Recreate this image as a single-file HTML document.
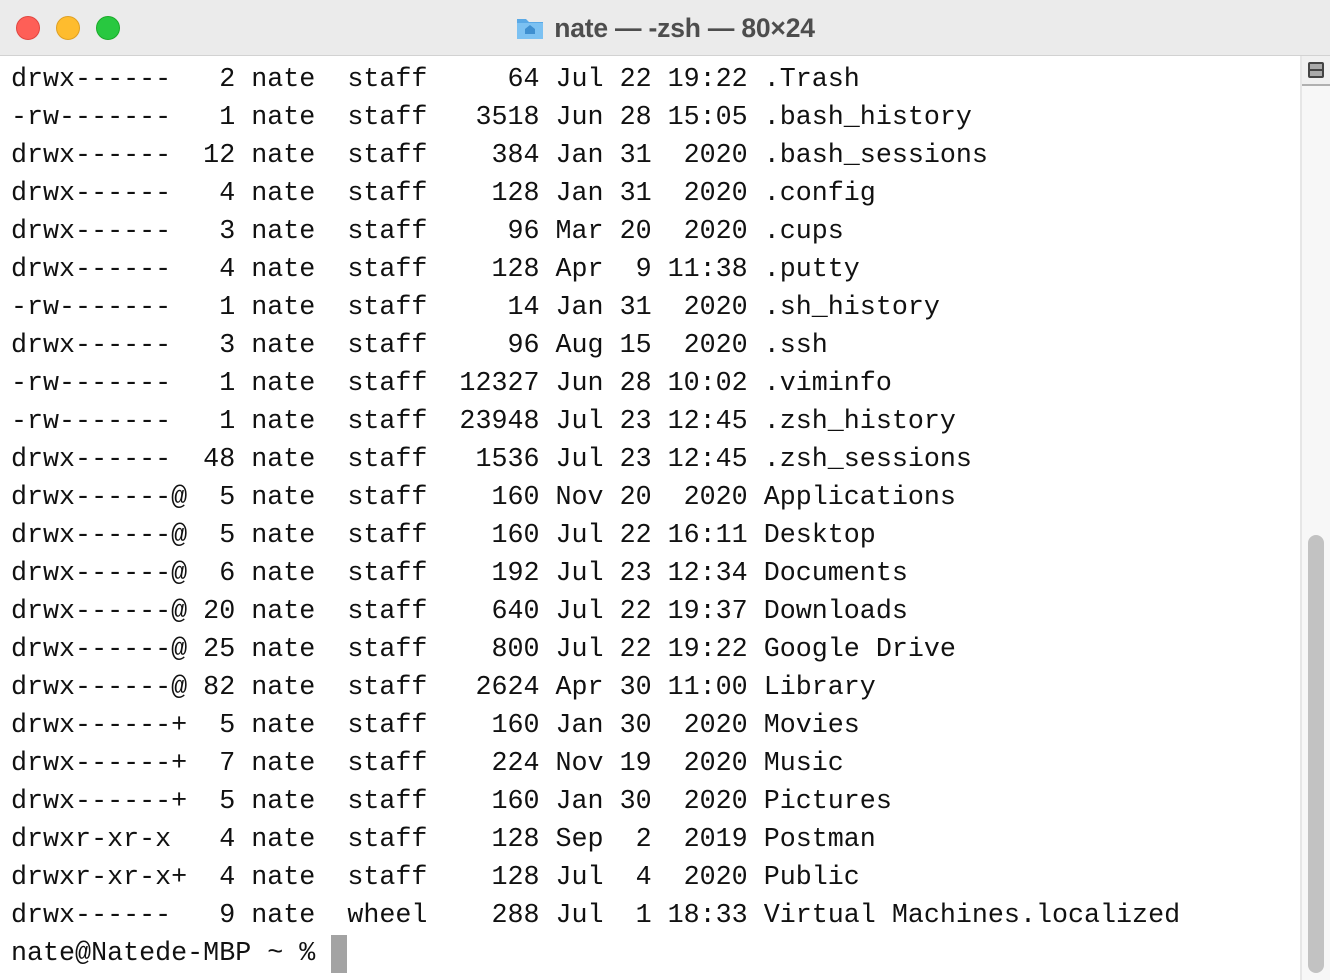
<!DOCTYPE html>
<html><head><meta charset="utf-8"><style>
html,body{margin:0;padding:0;width:1330px;height:980px;overflow:hidden;background:#fff}
.tb{position:absolute;left:0;top:0;width:1330px;height:56px;background:#ebebeb;border-bottom:1px solid #d2d2d2;box-sizing:border-box}
.dot{position:absolute;top:16px;width:24px;height:24px;border-radius:50%}
.title{position:absolute;left:0;width:1330px;top:13px;text-align:center;font:bold 26.5px "Liberation Sans",sans-serif;color:#4d4d4d;letter-spacing:-0.2px}
.term{position:absolute;left:11px;top:61px;font-family:"Liberation Mono",monospace;font-size:26.7px;line-height:38px;white-space:pre;color:#111}
.sb{position:absolute;left:1300px;top:56px;width:30px;height:924px;background:#f7f7f7;border-left:2px solid #e6e6e6;box-sizing:border-box}
.cur{display:inline-block;width:16px;height:38px;background:#a3a3a3;vertical-align:top}
</style></head><body>
<div class="tb">
<div class="dot" style="left:16px;background:#fe5f57;border:1px solid #e14640;box-sizing:border-box"></div>
<div class="dot" style="left:56px;background:#febc2e;border:1px solid #dfa023;box-sizing:border-box"></div>
<div class="dot" style="left:96px;background:#28c840;border:1px solid #1aab29;box-sizing:border-box"></div>
<div class="title"><svg width="30" height="26" viewBox="0 0 30 26" style="vertical-align:-4px;margin-right:9px"><path d="M2 4h9l3 3h14v17H2z" fill="#5aa9e6"/><rect x="2" y="8" width="26" height="16" fill="#7cc1f2"/><path d="M10 19v-5l5-4 5 4v5z" fill="#3f8fd0"/></svg>nate — -zsh — 80×24</div>
</div>
<div class="sb">
<div style="position:absolute;left:0;top:0;width:28px;height:30px;border-bottom:2px solid #b0b0b0;background:#f0f0f0;box-sizing:border-box"></div>
<div style="position:absolute;left:6px;top:6px;width:16px;height:16px;background:#444;border-radius:2px"></div>
<div style="position:absolute;left:8px;top:8px;width:12px;height:5px;background:#aaa"></div>
<div style="position:absolute;left:8px;top:15px;width:12px;height:5px;background:#aaa"></div>
<div style="position:absolute;left:6px;top:479px;width:16px;height:438px;background:#c2c2c2;border-radius:8px"></div>
</div>
<div class="term">drwx------   2 nate  staff     64 Jul 22 19:22 .Trash
-rw-------   1 nate  staff   3518 Jun 28 15:05 .bash_history
drwx------  12 nate  staff    384 Jan 31  2020 .bash_sessions
drwx------   4 nate  staff    128 Jan 31  2020 .config
drwx------   3 nate  staff     96 Mar 20  2020 .cups
drwx------   4 nate  staff    128 Apr  9 11:38 .putty
-rw-------   1 nate  staff     14 Jan 31  2020 .sh_history
drwx------   3 nate  staff     96 Aug 15  2020 .ssh
-rw-------   1 nate  staff  12327 Jun 28 10:02 .viminfo
-rw-------   1 nate  staff  23948 Jul 23 12:45 .zsh_history
drwx------  48 nate  staff   1536 Jul 23 12:45 .zsh_sessions
drwx------@  5 nate  staff    160 Nov 20  2020 Applications
drwx------@  5 nate  staff    160 Jul 22 16:11 Desktop
drwx------@  6 nate  staff    192 Jul 23 12:34 Documents
drwx------@ 20 nate  staff    640 Jul 22 19:37 Downloads
drwx------@ 25 nate  staff    800 Jul 22 19:22 Google Drive
drwx------@ 82 nate  staff   2624 Apr 30 11:00 Library
drwx------+  5 nate  staff    160 Jan 30  2020 Movies
drwx------+  7 nate  staff    224 Nov 19  2020 Music
drwx------+  5 nate  staff    160 Jan 30  2020 Pictures
drwxr-xr-x   4 nate  staff    128 Sep  2  2019 Postman
drwxr-xr-x+  4 nate  staff    128 Jul  4  2020 Public
drwx------   9 nate  wheel    288 Jul  1 18:33 Virtual Machines.localized
nate@Natede-MBP ~ % <span class="cur"></span></div>
</body></html>
